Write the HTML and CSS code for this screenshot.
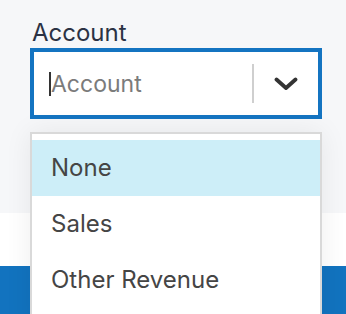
FILE: index.html
```html
<!DOCTYPE html>
<html lang="en">
<head>
    <meta charset="UTF-8">
    <title>Account Select</title>
    <meta name="viewport" content="width=device-width, initial-scale=1.0">
    <link rel="stylesheet" href="styles.css">
</head>
<body>
    <div class="panel">
        <div class="field">
            <label class="field-label">Account</label>
            <div class="select-box">
                <div class="select-value">
                    <span class="caret"></span>
                    <span class="placeholder">Account</span>
                </div>
                <span class="select-sep"></span>
                <div class="select-indicator">
                    <svg width="24" height="14" viewBox="0 0 24 14">
                        <path d="M2.5 2.5 L12 11 L21.5 2.5" fill="none" stroke="#333" stroke-width="3.8" stroke-linecap="round" stroke-linejoin="round"/>
                    </svg>
                </div>
            </div>
        </div>
    </div>
    <div class="strip"></div>
    <div class="footer-bar"></div>

    <!-- Dropdown menu -->
    <ul class="select-menu">
        <li class="select-option active">None</li>
        <li class="select-option">Sales</li>
        <li class="select-option">Other Revenue</li>
    </ul>
</body>
</html>
```

FILE: styles.css
```css
html, body {
    margin: 0;
    height: 100%;
    overflow: hidden;
}
body {
    position: relative;
    font-family: Inter, "Noto Sans", sans-serif;
    background: #fff;
}
.panel {
    background: #f6f7f9;
    height: 213px;
    padding: 18px 24px 0 30px;
    box-sizing: border-box;
}
.field-label {
    display: block;
    font-size: 24px;
    line-height: 29px;
    color: #2b3244;
    padding-left: 2px;
}
.select-box {
    margin-top: 1px;
    width: 292px;
    height: 71px;
    box-sizing: border-box;
    border: 4px solid #1474c1;
    background: #fff;
    display: flex;
    align-items: center;
}
.select-value {
    flex: 1;
    display: flex;
    align-items: center;
    padding-left: 15px;
}
.caret {
    width: 2px;
    height: 24px;
    background: #333;
}
.placeholder {
    font-size: 23px;
    color: #7b7b7b;
}
.select-sep {
    width: 2px;
    height: 39px;
    background: #cfcfcf;
}
.select-indicator {
    width: 64px;
    display: flex;
    justify-content: center;
    align-items: center;
}
.select-indicator svg {
    display: block;
}
.strip {
    height: 53px;
    background: #fff;
}
.footer-bar {
    height: 100px;
    background: #1273bf;
}
/* Menu */
.select-menu {
    position: absolute;
    top: 132px;
    left: 30px;
    width: 292px;
    box-sizing: border-box;
    margin: 0;
    padding: 6px 0 20px;
    list-style: none;
    background: #fff;
    border: 2px solid #d9d9d9;
    box-shadow: 0 0 26px rgba(0,0,0,0.07);
}
.select-option {
    height: 56px;
    line-height: 56px;
    padding-left: 19px;
    font-size: 24px;
    color: #454545;
}
.select-option.active {
    background: #cdeef8;
}
```
